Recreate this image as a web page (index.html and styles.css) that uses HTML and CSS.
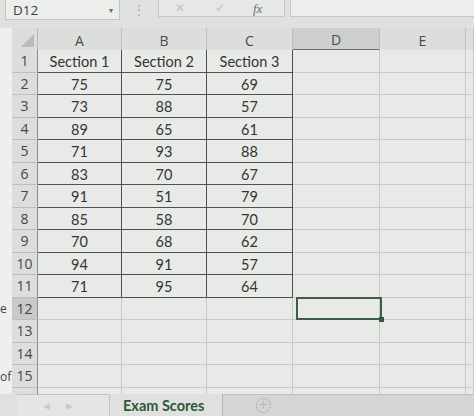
FILE: index.html
```html
<!DOCTYPE html>
<html>
<head>
<meta charset="utf-8">
<link rel="stylesheet" href="styles.css">
</head>
<body>
<div class="app">
  <div class="fbar">
    <div class="namebox"><span class="nm">D12</span><span class="caret">&#9662;</span></div>
    <div class="dots">&#8942;</div>
    <div class="fxgroup"><span class="x">&#10005;</span><span class="ok">&#10003;</span><span class="fx">fx</span></div>
    <div class="formula"></div>
  </div>
  <div class="sheet">
    <div class="row hdr">
      <div class="lm"></div>
      <div class="corner"><span class="tri"></span></div>
      <div class="ch">A</div><div class="ch">B</div><div class="ch">C</div><div class="ch on">D</div><div class="ch">E</div><div class="ch"></div>
    </div>
    <div class="row"><div class="lm"></div><div class="rh">1</div><div class="c d">Section 1</div><div class="c d">Section 2</div><div class="c d">Section 3</div><div class="c"></div><div class="c"></div><div class="c"></div></div>
    <div class="row"><div class="lm"></div><div class="rh">2</div><div class="c d">75</div><div class="c d">75</div><div class="c d">69</div><div class="c"></div><div class="c"></div><div class="c"></div></div>
    <div class="row"><div class="lm"></div><div class="rh">3</div><div class="c d">73</div><div class="c d">88</div><div class="c d">57</div><div class="c"></div><div class="c"></div><div class="c"></div></div>
    <div class="row"><div class="lm"></div><div class="rh">4</div><div class="c d">89</div><div class="c d">65</div><div class="c d">61</div><div class="c"></div><div class="c"></div><div class="c"></div></div>
    <div class="row"><div class="lm"></div><div class="rh">5</div><div class="c d">71</div><div class="c d">93</div><div class="c d">88</div><div class="c"></div><div class="c"></div><div class="c"></div></div>
    <div class="row"><div class="lm"></div><div class="rh">6</div><div class="c d">83</div><div class="c d">70</div><div class="c d">67</div><div class="c"></div><div class="c"></div><div class="c"></div></div>
    <div class="row"><div class="lm"></div><div class="rh">7</div><div class="c d">91</div><div class="c d">51</div><div class="c d">79</div><div class="c"></div><div class="c"></div><div class="c"></div></div>
    <div class="row"><div class="lm"></div><div class="rh">8</div><div class="c d">85</div><div class="c d">58</div><div class="c d">70</div><div class="c"></div><div class="c"></div><div class="c"></div></div>
    <div class="row"><div class="lm"></div><div class="rh">9</div><div class="c d">70</div><div class="c d">68</div><div class="c d">62</div><div class="c"></div><div class="c"></div><div class="c"></div></div>
    <div class="row"><div class="lm"></div><div class="rh">10</div><div class="c d">94</div><div class="c d">91</div><div class="c d">57</div><div class="c"></div><div class="c"></div><div class="c"></div></div>
    <div class="row"><div class="lm"></div><div class="rh">11</div><div class="c d">71</div><div class="c d">95</div><div class="c d">64</div><div class="c"></div><div class="c"></div><div class="c"></div></div>
    <div class="row"><div class="lm">e</div><div class="rh on">12</div><div class="c"></div><div class="c"></div><div class="c"></div><div class="c sel"></div><div class="c"></div><div class="c"></div></div>
    <div class="row"><div class="lm"></div><div class="rh">13</div><div class="c"></div><div class="c"></div><div class="c"></div><div class="c"></div><div class="c"></div><div class="c"></div></div>
    <div class="row"><div class="lm"></div><div class="rh">14</div><div class="c"></div><div class="c"></div><div class="c"></div><div class="c"></div><div class="c"></div><div class="c"></div></div>
    <div class="row"><div class="lm">of</div><div class="rh">15</div><div class="c"></div><div class="c"></div><div class="c"></div><div class="c"></div><div class="c"></div><div class="c"></div></div>
    <div class="row"><div class="lm"></div><div class="rh">16</div><div class="c"></div><div class="c"></div><div class="c"></div><div class="c"></div><div class="c"></div><div class="c"></div></div>
  </div>
  <div class="tabs">
    <div class="nav"><span>&#9664;</span><span>&#9654;</span></div>
    <div class="tab">Exam Scores</div>
    <div class="addzone"><span class="plus">+</span></div>
  </div>
</div>
</body>
</html>
```
FILE: styles.css
```css
* { box-sizing: border-box; margin: 0; padding: 0; }
html, body { width: 474px; height: 416px; overflow: hidden; }
body { background: #dfe1df; }

.app {
  width: 474px;
  height: 416px;
  overflow: hidden;
  background: #dfe1df;
  font-family: "Open Sans", "Noto Sans", sans-serif;
  color: #3a3c3a;
  display: flex;
  flex-direction: column;
}

/* formula bar */
.fbar {
  height: 28px;
  display: flex;
  align-items: flex-start;
  flex-shrink: 0;
}
.namebox {
  margin-left: 5px;
  width: 115px;
  height: 20px;
  background: #eceeec;
  border: 1px solid #c4c6c4;
  border-top: none;
  display: flex;
  align-items: center;
  justify-content: space-between;
  padding: 0 6px 0 7px;
}
.nm { font-size: 13.5px; color: #3c3e3c; }
.caret { font-size: 8px; color: #666; }
.dots {
  width: 38px;
  height: 20px;
  display: flex;
  align-items: center;
  justify-content: center;
  color: #a8aaa8;
  font-size: 12px;
  line-height: 1;
}
.fxgroup {
  width: 127px;
  height: 17px;
  background: #e6e8e6;
  border: 1px solid #c6c8c6;
  border-top: none;
  display: flex;
  align-items: center;
  padding-left: 16px;
  line-height: 1;
}
.fxgroup .x { width: 40px; color: #bfc1bf; font-size: 12px; }
.fxgroup .ok { width: 38px; color: #bfc1bf; font-size: 12px; }
.fxgroup .fx { font-family: "Liberation Serif", serif; font-style: italic; color: #6a6c6a; font-size: 13px; }
.formula {
  margin-left: 5px;
  flex: 1;
  height: 17px;
  background: #eceeec;
  border-left: 1px solid #c6c8c6;
  border-bottom: 1px solid #c6c8c6;
}

/* sheet */
.sheet {
  height: 366px;
  overflow: hidden;
  flex-shrink: 0;
}
.row {
  display: grid;
  grid-template-columns: 12px 26px 84px 85px 86px 87px 86px 8px;
  height: 22.5px;
}
.row.hdr { height: 22px; }
.lm {
  background: #eeefee;
  font-family: "Open Sans", sans-serif;
  font-size: 12px;
  color: #444;
  display: flex;
  align-items: center;
  justify-content: flex-start;
  white-space: nowrap;
}
.corner {
  background: #dcdedc;
  border-right: 1px solid #b6b8b6;
  border-bottom: 1px solid #9c9e9c;
  display: flex;
  align-items: flex-end;
  justify-content: flex-end;
  padding: 0 3px 3px 0;
}
.tri {
  width: 0; height: 0;
  border-left: 13px solid transparent;
  border-bottom: 13px solid #b9bbb9;
}
.ch {
  background: #dcdedc;
  border-right: 1px solid #bdbfbd;
  border-bottom: 1px solid #9c9e9c;
  font-family: "Open Sans", sans-serif;
  font-size: 14px;
  color: #4a4c4a;
  display: flex;
  align-items: center;
  justify-content: center;
  padding-top: 2px;
}
.ch.on {
  background: #cdcfcd;
  border-bottom: 2px solid #6c6e6c;
}
.rh {
  background: #dcdedc;
  border-right: 1px solid #8e908e;
  border-bottom: 1px solid #bdbfbd;
  font-family: "Open Sans", sans-serif;
  font-size: 14px;
  color: #444644;
  display: flex;
  align-items: center;
  justify-content: center;
}
.rh.on { background: #c8cac8; }
.c {
  background: #e8eae8;
  border-right: 1px solid #c8cac8;
  border-bottom: 1px solid #c8cac8;
  font-family: "Lato", "Open Sans", sans-serif;
  font-size: 14.5px;
  color: #333533;
  display: flex;
  align-items: center;
  justify-content: center;
  padding-top: 2px;
}
.c.d {
  border-right-color: #4f514f;
  border-bottom-color: #4f514f;
}
.c.sel { position: relative; }
.c.sel::after {
  content: "";
  position: absolute;
  left: 3px; top: -1px; right: -3px; bottom: -1px;
  border: 2px solid #3d5e46;
}
.c.sel::before {
  content: "";
  position: absolute;
  right: -5px; bottom: -3px;
  width: 5px; height: 5px;
  background: #2f5a3b;
  z-index: 2;
}

/* tabs */
.tabs {
  flex: 1;
  display: flex;
  align-items: stretch;
  background: #dfe1df;
}
.nav {
  margin-left: 17px;
  width: 93px;
  background: #e4e6e4;
  border-top: 1px solid #c2c4c2;
  border-right: 1px solid #c2c4c2;
  display: flex;
  align-items: center;
  padding-left: 26px;
  gap: 16px;
  color: #c9cbc9;
  font-size: 9px;
}
.tab {
  width: 112px;
  padding-left: 13px;
  display: flex;
  align-items: center;
  font-family: "Lato", "Open Sans", sans-serif;
  font-weight: 700;
  font-size: 14.5px;
  color: #2f5838;
}
.addzone {
  flex: 1;
  background: #d4d6d4;
  border-top: 1px solid #bfc1bf;
  border-left: 1px solid #b3b5b3;
  display: flex;
  align-items: center;
  padding-left: 33px;
}
.plus {
  width: 15px; height: 15px;
  border: 1px solid #b9bbb9;
  border-radius: 50%;
  color: #b9bbb9;
  font-size: 13px;
  line-height: 12px;
  text-align: center;
  font-family: "DejaVu Sans", sans-serif;
}
```
